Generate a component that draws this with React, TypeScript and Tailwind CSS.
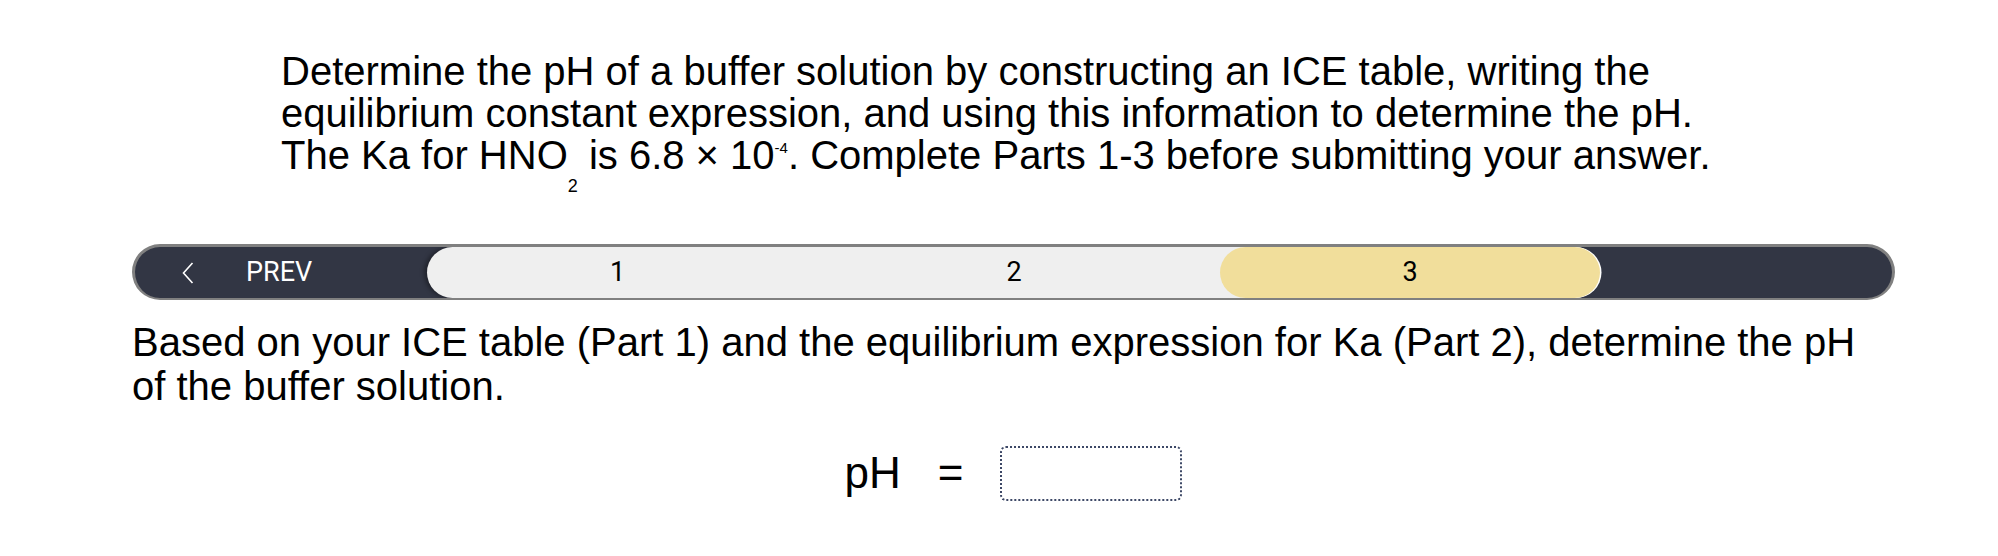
export default function App() {
  return (
    <main className="min-h-[556px] bg-white text-black font-['Liberation_Sans',Arial,sans-serif]">
      {/* Question prompt */}
      <div className="pl-[281px] pt-[50px] text-[40px] leading-[42px]">
        <p className="whitespace-nowrap">
          Determine the pH of a buffer solution by constructing an ICE table, writing the
        </p>
        <p className="whitespace-nowrap">
          equilibrium constant expression, and using this information to determine the pH.
        </p>
        <p className="whitespace-nowrap">
          The Ka for HNO
          <span className="relative top-[23px] text-[18px] leading-none">2</span> is 6.8 × 10
          <span className="relative -top-[16px] text-[15px] leading-none">-4</span>. Complete Parts 1-3
          before submitting your answer.
        </p>
      </div>

      <div className="ml-[132px] mt-[68px] w-[1763px]">
        {/* Part navigation */}
        <nav className="flex h-[56px] overflow-hidden rounded-full border-[3px] border-b-2 border-[#808080] bg-[#323644] font-['Roboto',sans-serif] text-[27px]">
          <button className="flex w-[292px] items-center pl-[47px] text-white">
            <svg width="12" height="22" viewBox="0 0 12 22" fill="none">
              <polyline points="10.5,1 1.5,11 10.5,21" stroke="#fff" strokeWidth="1.6" />
            </svg>
            <span className="ml-[52px]">PREV</span>
          </button>
          <div className="flex w-[1173px] rounded-full bg-[#efefef] shadow-[-3px_0_4px_rgba(0,0,0,0.35)]">
            <div className="flex w-[381px] items-center justify-center">1</div>
            <div className="flex w-[412px] items-center justify-center">2</div>
            <div className="flex w-[380px] items-center justify-center rounded-full bg-[#f1de9b] shadow-[1.5px_0_0_#fff]">
              3
            </div>
          </div>
        </nav>

        {/* Part 3 */}
        <div className="mt-[20px] text-[40px] leading-[44px]">
          <p className="whitespace-nowrap">
            Based on your ICE table (Part 1) and the equilibrium expression for Ka (Part 2), determine the pH
          </p>
          <p className="whitespace-nowrap">of the buffer solution.</p>
        </div>

        <div className="mt-[32px] flex items-center justify-center gap-[37px] text-[44px]">
          <span>pH</span>
          <span>=</span>
          <input
            type="text"
            aria-label="pH"
            className="h-[55px] w-[182px] rounded-[6px] border-2 border-dotted border-[#3d4866] bg-white outline-none"
          />
        </div>
      </div>
    </main>
  );
}
